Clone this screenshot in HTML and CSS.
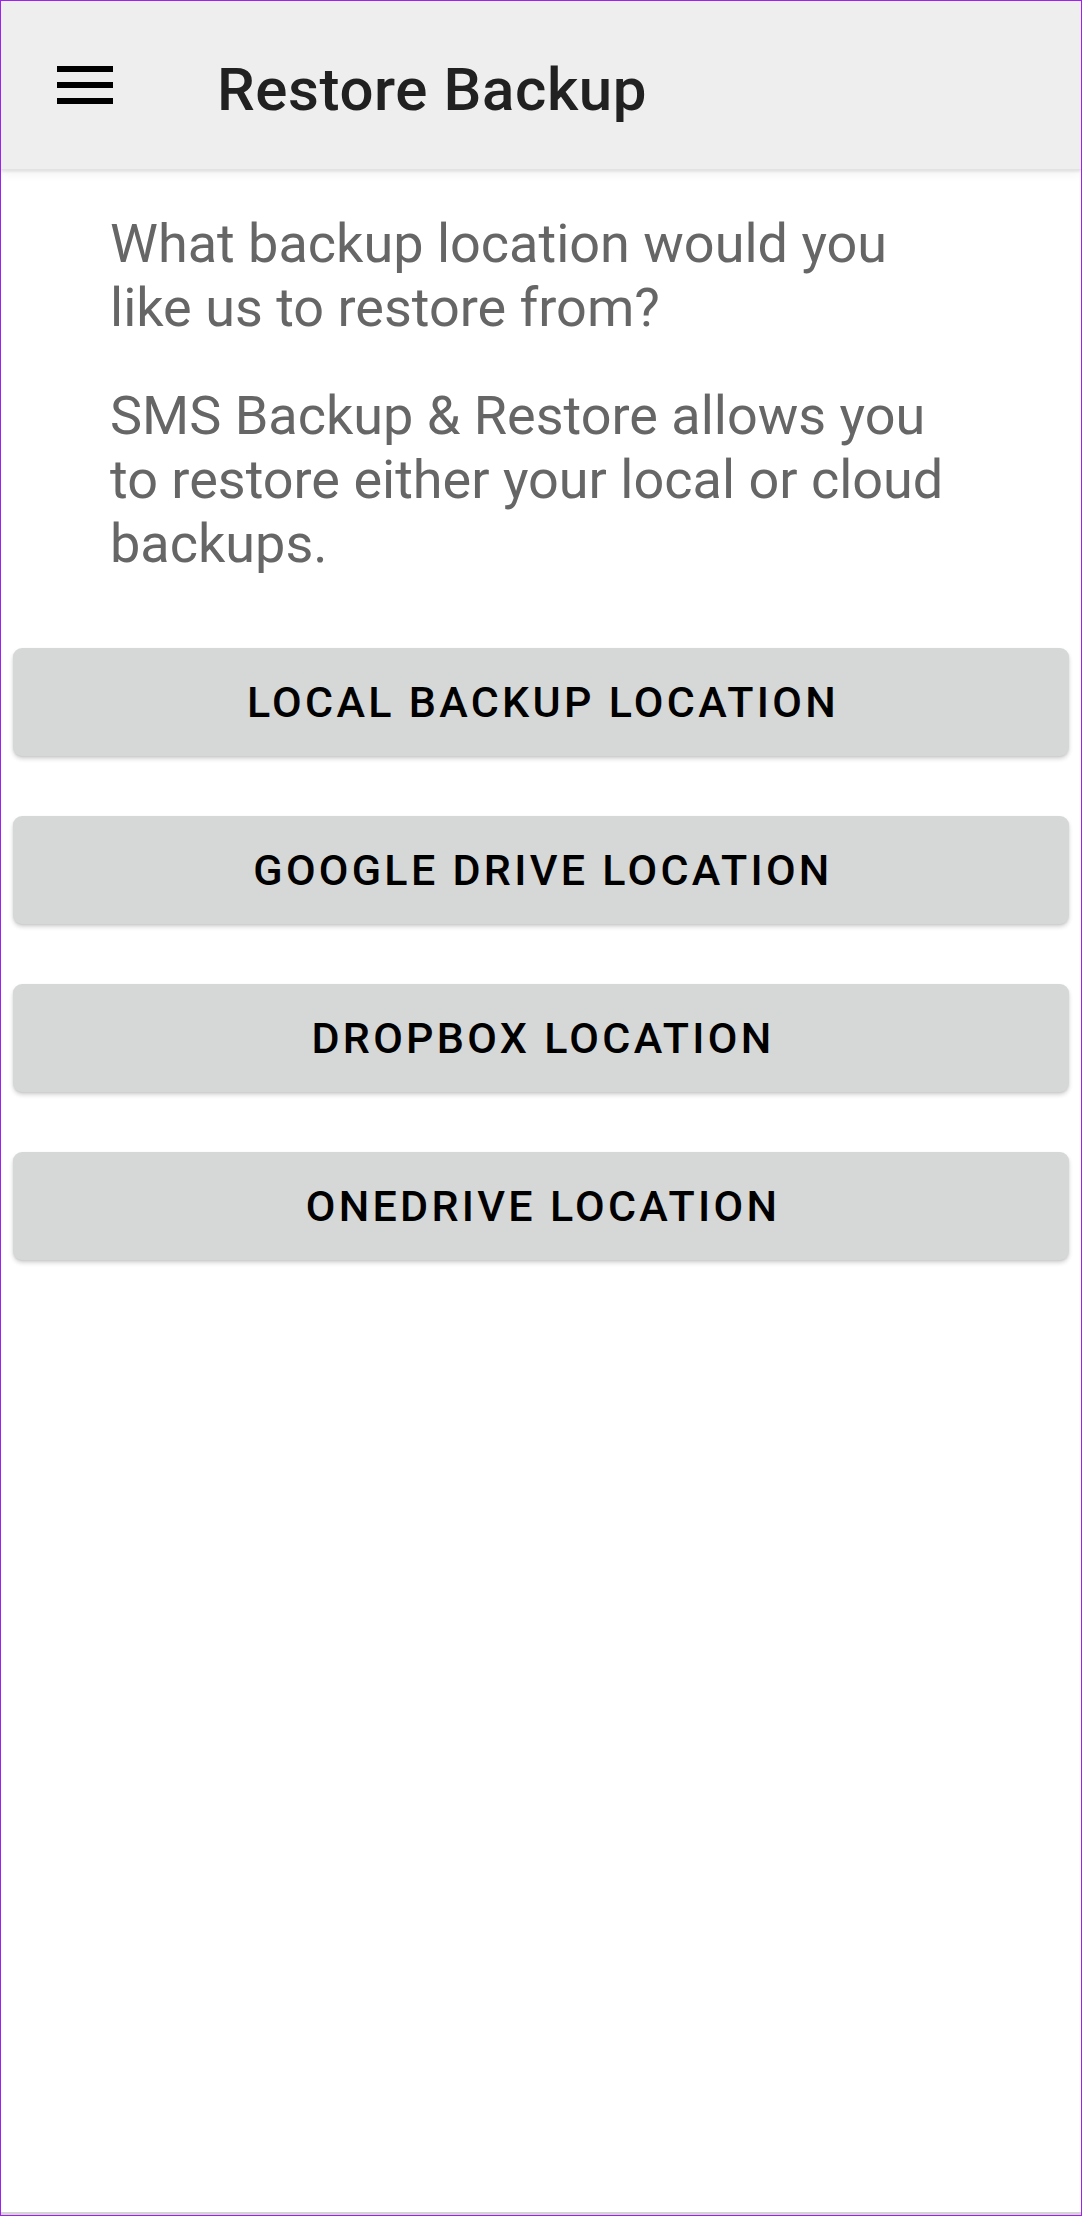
FILE: index.html
```html
<!DOCTYPE html>
<html lang="en">
<head>
<meta charset="utf-8">
<title>Restore Backup</title>
<link rel="stylesheet" href="styles.css">
</head>
<body>
<div class="frame">
  <header class="toolbar">
    <button class="menu-btn" aria-label="Menu">
      <svg width="56" height="38" viewBox="0 0 56 38" aria-hidden="true">
        <rect x="0" y="0" width="56" height="6" fill="#000"/>
        <rect x="0" y="16" width="56" height="6" fill="#000"/>
        <rect x="0" y="32" width="56" height="6" fill="#000"/>
      </svg>
    </button>
    <h1 class="title">Restore Backup</h1>
  </header>
  <main class="content">
    <div class="intro">
      <p class="para">What backup location would you like us to restore from?</p>
      <p class="para para-second">SMS Backup &amp; Restore allows you to restore either your local or cloud backups.</p>
    </div>
    <div class="actions">
      <button class="loc-btn">Local Backup Location</button>
      <button class="loc-btn">Google Drive Location</button>
      <button class="loc-btn">Dropbox Location</button>
      <button class="loc-btn">OneDrive Location</button>
    </div>
  </main>
  <div class="navbar-edge"></div>
</div>
</body>
</html>
```

FILE: styles.css
```css
* {
  box-sizing: border-box;
}

html, body {
  margin: 0;
  padding: 0;
  background: #ffffff;
}

body {
  font-family: Roboto, "Noto Sans", "Liberation Sans", sans-serif;
}

.frame {
  width: 1082px;
  height: 2216px;
  border: 1px solid #a020f0;
  display: flex;
  flex-direction: column;
  background: #ffffff;
  overflow: hidden;
}

.toolbar {
  height: 169px;
  flex: 0 0 auto;
  background: #eeeeee;
  display: flex;
  align-items: center;
  padding-top: 8px;
  box-shadow: 0 2px 2px rgba(0, 0, 0, 0.08), 0 4px 10px rgba(0, 0, 0, 0.05);
  border-bottom: 1px solid #e2e2e2;
  position: relative;
  z-index: 1;
}

.menu-btn {
  margin: -8px 0 0 56px;
  padding: 0;
  border: 0;
  background: transparent;
  width: 56px;
  height: 38px;
  display: flex;
}

.title {
  margin: 0 0 0 104px;
  font-family: Roboto, "Noto Sans", sans-serif;
  font-weight: 500;
  font-size: 60px;
  letter-spacing: 0.6px;
  color: #212121;
  line-height: normal;
}

.content {
  flex: 1 1 auto;
  display: flex;
  flex-direction: column;
}

.intro {
  padding: 42px 110px 0 109px;
}

.para {
  margin: 0;
  font-family: Roboto, "Noto Sans", sans-serif;
  font-weight: 400;
  font-size: 54px;
  line-height: 64px;
  color: #666666;
}

.para-second {
  margin-top: 44px;
}

.actions {
  display: flex;
  flex-direction: column;
  gap: 60px;
  padding: 72px 12px 0 12px;
}

.loc-btn {
  height: 108px;
  border: 0;
  border-radius: 9px;
  background: #d6d7d7;
  box-shadow: 0 3px 4px rgba(0, 0, 0, 0.16), 0 1px 2px rgba(0, 0, 0, 0.08);
  font-family: Roboto, "Noto Sans", sans-serif;
  font-weight: 500;
  font-size: 43px;
  letter-spacing: 3.3px;
  text-transform: uppercase;
  color: #000000;
  display: flex;
  align-items: center;
  justify-content: center;
  padding: 0 0 0 4px;
}

.navbar-edge {
  flex: 0 0 auto;
  height: 3px;
  background: #d4d4d4;
}
```
